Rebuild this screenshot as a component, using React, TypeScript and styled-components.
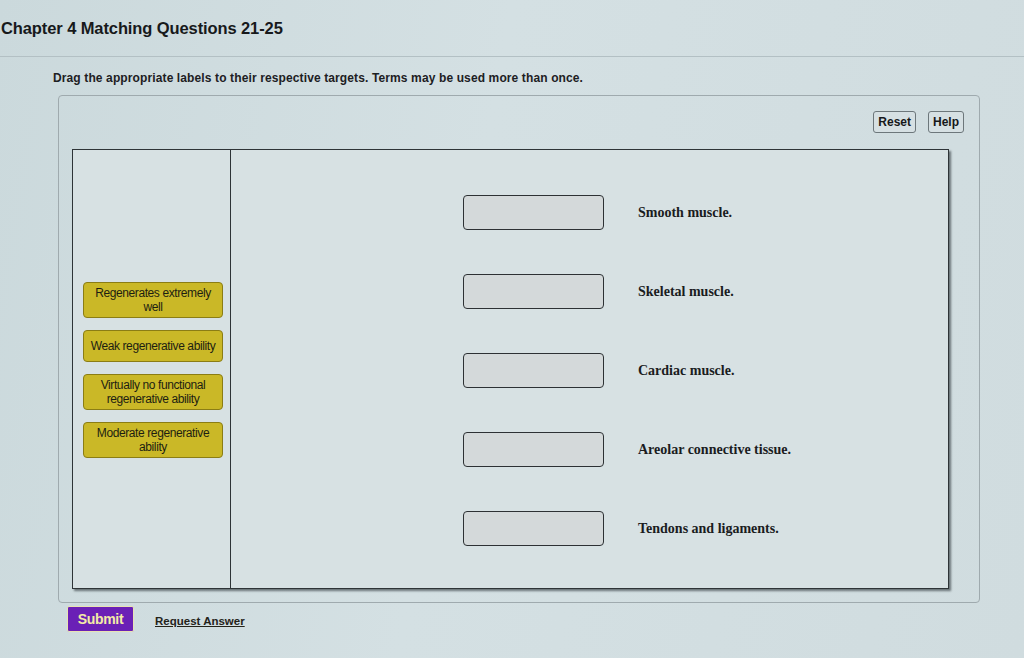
import React from 'react';
import styled, {createGlobalStyle} from 'styled-components';

const GlobalStyle = createGlobalStyle`
  html, body {
    margin: 0;
    padding: 0;
    background: #cdd9dc;
  }
  body {
    font-family: 'Liberation Sans', Arial, sans-serif;
    color: #1c1f22;
    overflow: hidden;
  }
`;

const Page = styled.div`
  width: 1024px;
  height: 658px;
  display: flex;
  flex-direction: column;
  background: linear-gradient(100deg, #cbd9dc 0%, #d4e0e3 45%, #d0dcdf 100%);
`;

const Header = styled.header`
  height: 56px;
  border-bottom: 1px solid #b3c0c4;
  display: flex;
  align-items: flex-start;
`;

const Title = styled.h1`
  margin: 19px 0 0 1px;
  font-size: 16.5px;
  font-weight: 700;
  letter-spacing: -0.1px;
  color: #17191b;
`;

const Instructions = styled.p`
  margin: 14px 0 0 53px;
  font-size: 12px;
  font-weight: 700;
  letter-spacing: 0.12px;
  color: #1d2023;
`;

const Panel = styled.section`
  margin: 10px 0 0 58px;
  width: 922px;
  box-sizing: border-box;
  padding: 15px 15px 13px 13px;
  border: 1px solid #9faaae;
  border-radius: 4px;
  display: flex;
  flex-direction: column;
  gap: 16px;
`;

const Toolbar = styled.div`
  display: flex;
  justify-content: flex-end;
  gap: 12px;
`;

const ToolButton = styled.button`
  height: 22px;
  padding: 0 4px;
  font-family: 'Liberation Sans', Arial, sans-serif;
  font-size: 12px;
  font-weight: 700;
  color: #16181a;
  background: #d6e0e3;
  border: 1px solid #6d777b;
  border-radius: 3px;
`;

const Canvas = styled.div`
  height: 438px;
  margin-right: 15px;
  display: grid;
  grid-template-columns: 158px 1fr;
  background: #d7e1e3;
  border: 1px solid #2e3437;
  box-shadow: 2px 2px 2px rgba(20, 28, 32, 0.55);
`;

const LabelColumn = styled.div`
  border-right: 1px solid #2e3437;
  padding: 132px 0 0 10px;
  display: flex;
  flex-direction: column;
  gap: 12px;
`;

const DragLabel = styled.div<{$tall?: boolean}>`
  width: 140px;
  box-sizing: border-box;
  min-height: ${(p) => (p.$tall ? 35 : 32)}px;
  padding: 3px 1px;
  display: flex;
  align-items: center;
  justify-content: center;
  text-align: center;
  font-size: 12px;
  line-height: 14px;
  letter-spacing: -0.4px;
  color: #1d1e12;
  background: #cab827;
  border: 1px solid #8b7d14;
  border-radius: 4px;
`;

const TargetColumn = styled.div`
  padding: 45px 0 0 232px;
  display: flex;
  flex-direction: column;
  gap: 44px;
`;

const TargetRow = styled.div`
  display: flex;
  align-items: center;
  gap: 34px;
`;

const DropZone = styled.div`
  width: 141px;
  height: 35px;
  box-sizing: border-box;
  background: #d4d9da;
  border: 1px solid #2d3134;
  border-radius: 4px;
`;

const Term = styled.span`
  font-family: 'Liberation Serif', 'Times New Roman', serif;
  font-size: 14px;
  font-weight: 700;
  color: #1a1c1e;
`;

const Footer = styled.div`
  margin: 3px 0 0 67px;
  display: flex;
  align-items: center;
  gap: 21px;
`;

const SubmitButton = styled.button`
  width: 67px;
  height: 26px;
  font-family: 'Liberation Sans', Arial, sans-serif;
  font-size: 14px;
  font-weight: 700;
  letter-spacing: -0.3px;
  color: #f3eca6;
  background: #6a20b6;
  border: 1px solid #e9e2b4;
  border-radius: 2px;
`;

const RequestLink = styled.a`
  margin-top: 4px;
  font-size: 11.5px;
  font-weight: 700;
  color: #24231a;
  text-decoration: underline;
`;

const labels = [
  {text: 'Regenerates extremely well', tall: true},
  {text: 'Weak regenerative ability', tall: false},
  {text: 'Virtually no functional regenerative ability', tall: true},
  {text: 'Moderate regenerative ability', tall: true},
];

const terms = [
  'Smooth muscle.',
  'Skeletal muscle.',
  'Cardiac muscle.',
  'Areolar connective tissue.',
  'Tendons and ligaments.',
];

export default function App() {
  return (
    <Page>
      <GlobalStyle />
      <Header>
        <Title>Chapter 4 Matching Questions 21-25</Title>
      </Header>
      <Instructions>
        Drag the appropriate labels to their respective targets. Terms may be
        used more than once.
      </Instructions>
      <Panel>
        <Toolbar>
          <ToolButton>Reset</ToolButton>
          <ToolButton>Help</ToolButton>
        </Toolbar>
        <Canvas>
          <LabelColumn>
            {labels.map((l) => (
              <DragLabel key={l.text} $tall={l.tall}>
                {l.text}
              </DragLabel>
            ))}
          </LabelColumn>
          <TargetColumn>
            {terms.map((t) => (
              <TargetRow key={t}>
                <DropZone />
                <Term>{t}</Term>
              </TargetRow>
            ))}
          </TargetColumn>
        </Canvas>
      </Panel>
      <Footer>
        <SubmitButton>Submit</SubmitButton>
        <RequestLink href="#">Request Answer</RequestLink>
      </Footer>
    </Page>
  );
}
